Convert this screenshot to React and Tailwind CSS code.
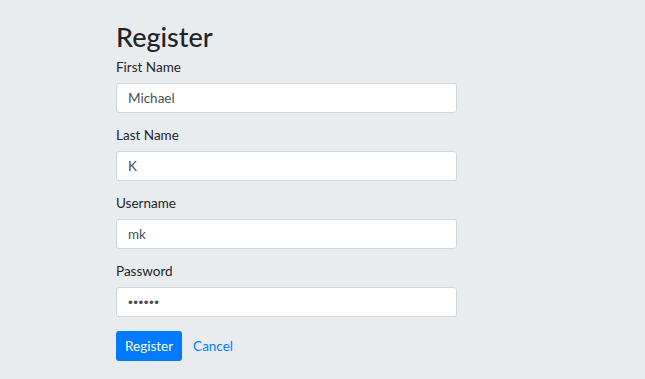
import React, { useState } from 'react';

// Register form, bootstrap-like look
const fields = [
  { label: 'First Name', type: 'text', value: 'Michael' },
  { label: 'Last Name', type: 'text', value: 'K' },
  { label: 'Username', type: 'text', value: 'mk' },
  { label: 'Password', type: 'password', value: 'secret' },
];

export default function App() {
  const [values, setValues] = useState(fields.map((f) => f.value));

  return (
    <div
      className="min-h-[379px] w-full bg-[#e9ecef] text-[#212529]"
      style={{ fontFamily: 'Lato, "Noto Sans", sans-serif' }}
    >
      <div className="pl-[116px] pt-[20px]">
        <h2 className="text-[27px] leading-[33px] font-medium mb-[4px]">Register</h2>
        <form className="w-[341px]" onSubmit={(e) => e.preventDefault()}>
          {fields.map((f, i) => (
            <div key={f.label} className="mb-[12px]">
              <label className="block text-[13.5px] leading-[20px] mb-[6px]">{f.label}</label>
              <input
                type={f.type}
                value={values[i]}
                onChange={(e) => {
                  const next = [...values];
                  next[i] = e.target.value;
                  setValues(next);
                }}
                className={`block w-full h-[30px] px-[11px] text-[13.5px] text-[#495057] bg-white border border-[#ced4da] rounded-[3px] outline-none ${
                  f.type === 'password' ? 'font-["Liberation_Sans"] tracking-[0.5px]' : ''
                }`}
              />
            </div>
          ))}
          <div className="flex items-center gap-[11px] mt-[14px]">
            <button
              type="submit"
              className="h-[30px] px-[9px] text-[13.5px] text-white bg-[#007bff] rounded-[3px]"
            >
              Register
            </button>
            <a href="#" className="text-[13.5px] text-[#007bff]">Cancel</a>
          </div>
        </form>
      </div>
    </div>
  );
}
